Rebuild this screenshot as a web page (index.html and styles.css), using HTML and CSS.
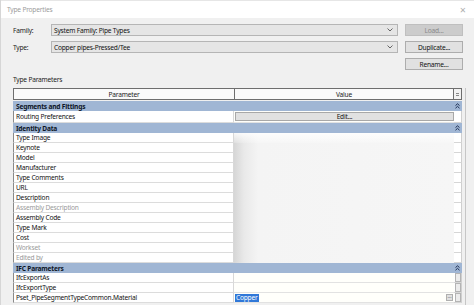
FILE: index.html
```html
<!DOCTYPE html>
<html>
<head>
<meta charset="utf-8">
<link rel="stylesheet" href="styles.css">
</head>
<body>
<div class="window">
  <div class="titlebar">
    <span class="title">Type Properties</span>
    <span class="close">✕</span>
  </div>
  <div class="body">
    <div class="top">
      <span class="lbl">Family:</span>
      <div class="select"><span>System Family: Pipe Types</span><svg class="chev" viewBox="0 0 6 4" width="6" height="4"><path d="M0.5 0.5 L3 3 L5.5 0.5" fill="none" stroke="#555" stroke-width="0.9"/></svg></div>
      <div class="btn disabled">Load...</div>
      <span class="lbl">Type:</span>
      <div class="select"><span>Copper pipes-Pressed/Tee</span><svg class="chev" viewBox="0 0 6 4" width="6" height="4"><path d="M0.5 0.5 L3 3 L5.5 0.5" fill="none" stroke="#555" stroke-width="0.9"/></svg></div>
      <div class="btn">Duplicate...</div>
      <span></span><span></span>
      <div class="btn">Rename...</div>
    </div>
    <div class="caption">Type Parameters</div>
    <div class="table">
      <div class="thead">
        <div class="th param">Parameter</div>
        <div class="th value">Value</div>
        <div class="th corner"><span class="eq"></span></div>
      </div>

      <div class="group"><span>Segments and Fittings</span><svg class="collapse" viewBox="0 0 5 6" width="5" height="6"><path d="M0.5 2.6 L2.5 0.8 L4.5 2.6 M0.5 5.2 L2.5 3.4 L4.5 5.2" fill="none" stroke="#1d2f55" stroke-width="1"/></svg></div>
      <div class="row tall"><div class="c p">Routing Preferences</div><div class="c v plain"><div class="edit">Edit...</div></div><div class="c s"></div></div>

      <div class="group"><span>Identity Data</span><svg class="collapse" viewBox="0 0 5 6" width="5" height="6"><path d="M0.5 2.6 L2.5 0.8 L4.5 2.6 M0.5 5.2 L2.5 3.4 L4.5 5.2" fill="none" stroke="#1d2f55" stroke-width="1"/></svg></div>
      <div class="row"><div class="c p">Type Image</div><div class="c v blur first"></div><div class="c s"></div></div>
      <div class="row"><div class="c p">Keynote</div><div class="c v blur"></div><div class="c s"></div></div>
      <div class="row"><div class="c p">Model</div><div class="c v blur"></div><div class="c s"></div></div>
      <div class="row"><div class="c p">Manufacturer</div><div class="c v blur"></div><div class="c s"></div></div>
      <div class="row"><div class="c p">Type Comments</div><div class="c v blur"></div><div class="c s"></div></div>
      <div class="row"><div class="c p">URL</div><div class="c v blur"></div><div class="c s"></div></div>
      <div class="row"><div class="c p">Description</div><div class="c v blur"></div><div class="c s"></div></div>
      <div class="row"><div class="c p ro">Assembly Description</div><div class="c v blur"></div><div class="c s"></div></div>
      <div class="row"><div class="c p">Assembly Code</div><div class="c v blur"></div><div class="c s"></div></div>
      <div class="row"><div class="c p">Type Mark</div><div class="c v blur"></div><div class="c s"></div></div>
      <div class="row"><div class="c p">Cost</div><div class="c v blur"></div><div class="c s"></div></div>
      <div class="row"><div class="c p ro">Workset</div><div class="c v blur"></div><div class="c s"></div></div>
      <div class="row"><div class="c p ro">Edited by</div><div class="c v blur"></div><div class="c s"></div></div>

      <div class="group"><span>IFC Parameters</span><svg class="collapse" viewBox="0 0 5 6" width="5" height="6"><path d="M0.5 2.6 L2.5 0.8 L4.5 2.6 M0.5 5.2 L2.5 3.4 L4.5 5.2" fill="none" stroke="#1d2f55" stroke-width="1"/></svg></div>
      <div class="row"><div class="c p">IfcExportAs</div><div class="c v plain"></div><div class="c s"><span class="mini"></span></div></div>
      <div class="row"><div class="c p">IfcExportType</div><div class="c v plain"></div><div class="c s"><span class="mini"></span></div></div>
      <div class="row"><div class="c p">Pset_PipeSegmentTypeCommon.Material</div><div class="c v plain"><span class="sel">Copper</span><span class="dots">...</span></div><div class="c s"><span class="mini"></span></div></div>
    </div>
  </div>
</div>
</body>
</html>
```
FILE: styles.css
```css
* { box-sizing: border-box; }
html, body { margin: 0; padding: 0; }
body {
  width: 474px;
  height: 305px;
  overflow: hidden;
  background: #f0f0f0;
  font-family: "Noto Sans", "DejaVu Sans", sans-serif;
  font-size: 6.6px;
  letter-spacing: -0.2px;
  color: #111;
}
.window {
  width: 474px;
  height: 305px;
  overflow: hidden;
  background: #f0f0f0;
  border-left: 1px solid #d6d6d6;
  position: relative;
}
.titlebar {
  height: 18px;
  background: #fff;
  border-top: 1px solid #e6e6e6;
  display: flex;
  align-items: center;
  justify-content: space-between;
  padding: 0 8px 0 6px;
}
.title { color: #9c9c9c; }
.close { color: #b0b0b0; font-size: 8px; }
.body {
  padding: 6px 11px 0 12px;
  position: relative;
}
.top {
  display: grid;
  grid-template-columns: 31px 347px 58px;
  grid-auto-rows: 12px;
  column-gap: 7px;
  row-gap: 5px;
}
.lbl { display: flex; align-items: center; color: #222; }
.select {
  background: #e5e5e5;
  border: 1px solid #b5b5b5;
  display: flex;
  align-items: center;
  justify-content: space-between;
  padding: 0 4px 0 2px;
  color: #111;
}
.btn {
  background: #e1e1e1;
  border: 1px solid #adadad;
  display: flex;
  align-items: center;
  justify-content: center;
  color: #111;
}
.btn.disabled { background: #cccccc; border-color: #bfbfbf; color: #8a8a8a; }
.caption { margin-top: 5px; height: 10px; line-height: 10px; color: #222; }
.table {
  margin-top: 3px;
  width: 449px;
  position: relative;
}
.table::after {
  content: "";
  position: absolute;
  left: 452px;
  top: 0;
  height: 230px;
  width: 1px;
  background: #c6c6c6;
}
.thead {
  display: flex;
  height: 12px;
  margin-bottom: 1px;
}
.th {
  background: #fafafa;
  border: 1px solid #6e6e6e;
  display: flex;
  align-items: center;
  justify-content: center;
  color: #222;
}
.th.param { width: 221px; border-right: none; }
.th.value { width: 220px; }
.th.corner { width: 8px; border-left: none; background: #f2f2f2; }
.eq { width: 3px; height: 3px; border-top: 1px solid #888; border-bottom: 1px solid #888; }
.group {
  height: 10px;
  background: #a0b6d4;
  display: flex;
  align-items: center;
  justify-content: space-between;
  padding: 0 2px 0 3px;
  font-weight: bold;
  color: #0d1526;
  width: 449px;
}
.row {
  display: flex;
  height: 10px;
}
.row.tall { height: 12px; }
.c { height: 100%; }
.c.p {
  width: 221px;
  background: #fff;
  border-left: 1px solid #8a8a8a;
  border-right: 1px solid #d8d8d8;
  border-bottom: 1px solid #dcdcdc;
  padding-left: 2px;
  display: flex;
  align-items: center;
  white-space: nowrap;
}
.c.p.ro { color: #9a9a9a; }
.c.v {
  width: 220px;
  display: flex;
  align-items: center;
  position: relative;
}
.c.v.plain {
  background: #fffffb;
  border-bottom: 1px solid #e2e2e2;
}
.c.v.blur {
  background: linear-gradient(to right, #d6d6d6 0px, #e9e9e9 10px, #f4f4f4 24px, #f6f6f6 100%);
}
.c.v.blur.first {
  background: linear-gradient(to bottom, rgba(255,255,255,0.8), rgba(255,255,255,0)), linear-gradient(to right, #dedede 0px, #ececec 10px, #f6f6f6 24px, #f7f7f7 100%);
}
.c.s {
  width: 8px;
  background: #fff;
  border-right: 1px solid #cfcfcf;
  border-bottom: 1px solid #d6d6d6;
  display: flex;
  align-items: center;
  justify-content: center;
}
.edit {
  width: 219px;
  height: 9px;
  margin-left: 1px;
  background: #e1e1e1;
  border: 1px solid #a8a8a8;
  display: flex;
  align-items: center;
  justify-content: center;
}
.mini {
  width: 6px;
  height: 9px;
  background: #ececec;
  border: 1px solid #b4b4b4;
}
.sel {
  background: #3078d8;
  color: #fff;
  padding: 0 1px;
  margin-left: 1px;
  line-height: 8px;
}
.dots {
  position: absolute;
  right: 1px;
  top: 1px;
  width: 7px;
  height: 7px;
  background: #e0e0e0;
  border: 1px solid #b0b0b0;
  font-size: 5px;
  letter-spacing: 0;
  line-height: 3px;
  text-align: center;
  color: #555;
}
```
